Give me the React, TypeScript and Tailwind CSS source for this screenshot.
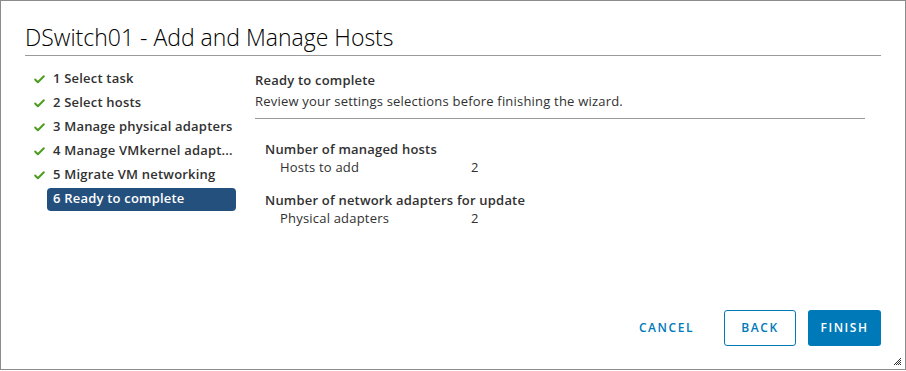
import { Check } from 'lucide-react'

const steps = [
  { n: 1, label: 'Select task', done: true },
  { n: 2, label: 'Select hosts', done: true },
  { n: 3, label: 'Manage physical adapters', done: true },
  { n: 4, label: 'Manage VMkernel adapt...', done: true },
  { n: 5, label: 'Migrate VM networking', done: true },
  { n: 6, label: 'Ready to complete', done: false },
]

const sections = [
  { title: 'Number of managed hosts', rows: [{ k: 'Hosts to add', v: '2' }] },
  { title: 'Number of network adapters for update', rows: [{ k: 'Physical adapters', v: '2' }] },
]

export default function App() {
  return (
    <div className="w-[906px] h-[371px] bg-white" style={{ fontFamily: '"Open Sans", sans-serif' }}>
      <div className="relative w-[906px] h-[370px] border border-[#8c8c8c] flex flex-col text-[#313131]">
        {/* header */}
        <div className="pl-[24px] pr-[24px] pt-[21px]">
          <h1 className="text-[23px] leading-[30px] font-light text-[#000] pb-[3px] border-b border-[#9a9a9a]">
            DSwitch01 - Add and Manage Hosts
          </h1>
        </div>

        <div className="flex flex-1 pt-[11px] tracking-[0.2px]">
          {/* steps */}
          <div className="w-[254px] pl-[30px] shrink-0">
            {steps.map(s => (
              <div key={s.n} className="flex items-center h-[24px]">
                <div className="w-[16px] flex justify-start pl-[2px]">
                  {s.done && <Check size={13} strokeWidth={3.5} className="text-[#4a9a1a]" />}
                </div>
                <div
                  className={`w-[189px] h-[23px] flex items-center px-[6px] rounded-[4px] text-[13px] font-semibold whitespace-nowrap ${
                    s.done ? '' : 'bg-[#24507e] text-white'
                  }`}
                >
                  {s.n} {s.label}
                </div>
              </div>
            ))}
          </div>

          {/* content */}
          <div className="flex-1 pr-[40px] pt-[4px]">
            <p className="text-[13px] font-semibold leading-[18px]">Ready to complete</p>
            <p className="text-[13px] leading-[18px] mt-[3px] pb-[8px] border-b border-[#9a9a9a]">
              Review your settings selections before finishing the wizard.
            </p>
            <div className="pl-[10px] pt-[21px] space-y-[15px]">
              {sections.map(sec => (
                <div key={sec.title}>
                  <p className="text-[13px] font-semibold leading-[18px]">{sec.title}</p>
                  {sec.rows.map(r => (
                    <div key={r.k} className="flex text-[13px] leading-[18px] pl-[15px]">
                      <span className="w-[191px]">{r.k}</span>
                      <span>{r.v}</span>
                    </div>
                  ))}
                </div>
              ))}
            </div>
          </div>
        </div>

        {/* footer */}
        <div className="flex justify-end items-center gap-[12px] pr-[24px] pb-[23px]">
          <button className="h-[36px] px-[18px] text-[12px] font-semibold tracking-[0.13em] text-[#0079b8]">CANCEL</button>
          <button className="h-[36px] w-[72px] rounded-[3px] border border-[#0079b8] text-[12px] font-semibold tracking-[0.13em] text-[#0079b8]">BACK</button>
          <button className="h-[36px] w-[73px] rounded-[3px] bg-[#0079b8] text-[12px] font-semibold tracking-[0.13em] text-white">FINISH</button>
        </div>

        <svg className="absolute right-[3px] bottom-[3px]" width="9" height="9" viewBox="0 0 9 9">
          <path d="M8 1L1 8M8 3L3 8M8 5L5 8M8 7L7 8" stroke="#333" strokeWidth="1" />
        </svg>
      </div>
    </div>
  )
}
